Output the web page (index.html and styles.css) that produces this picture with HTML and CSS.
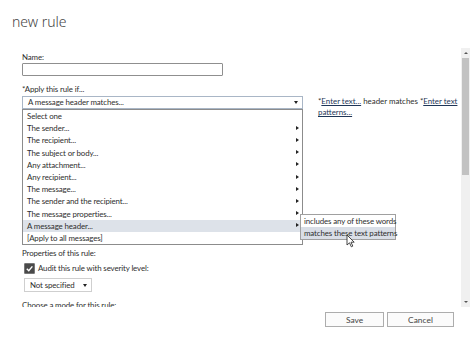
FILE: index.html
```html
<!DOCTYPE html>
<html lang="en">

<head>
  <meta charset="UTF-8">
  <meta name="viewport" content="width=device-width, initial-scale=1.0">
  <title>new rule</title>
  <link rel="stylesheet" href="styles.css">
</head>

<body>
  <div class="header">new rule</div>

  <div class="main">
    <div class="content">
      <div class="label">Name:</div>
      <div class="textInput"></div>

      <div class="label mt">*Apply this rule if...</div>
      <div class="condition">
        <div class="selectWrap">
          <div class="select">
            <span>A message header matches...</span>
            <span class="caret"></span>
          </div>
          <ul class="list">
            <li>Select one</li>
            <li class="sub">The sender...</li>
            <li class="sub">The recipient...</li>
            <li class="sub">The subject or body...</li>
            <li class="sub">Any attachment...</li>
            <li class="sub">Any recipient...</li>
            <li class="sub">The message...</li>
            <li class="sub">The sender and the recipient...</li>
            <li class="sub">The message properties...</li>
            <li class="sub active">A message header...
              <ul class="submenu">
                <li>includes any of these words</li>
                <li class="hover">matches these text patterns</li>
              </ul>
              <svg class="cursor" width="10" height="14" viewBox="0 0 10 14">
                <path d="M1 1 L1 11 L3.5 8.8 L5.3 12.8 L6.8 12.1 L5 8.2 L8.2 8.2 Z" fill="#fff" stroke="#333" stroke-width="0.9" stroke-linejoin="round" />
              </svg>
            </li>
            <li>[Apply to all messages]</li>
          </ul>
        </div>
        <p class="desc">*<a href="#">Enter text...</a> header matches *<a href="#">Enter text patterns...</a></p>
      </div>

      <div class="label props">Properties of this rule:</div>
      <div class="check">
        <span class="box"></span>
        <span>Audit this rule with severity level:</span>
      </div>
      <div class="severity">
        <span>Not specified</span>
        <span class="caret"></span>
      </div>
      <div class="label mode">Choose a mode for this rule:</div>
    </div>

    <div class="scrollbar">
      <div class="arrow up"></div>
      <div class="track">
        <div class="thumb"></div>
      </div>
      <div class="arrow down"></div>
    </div>
  </div>

  <div class="footer">
    <button>Save</button>
    <button>Cancel</button>
  </div>
</body>

</html>
```

FILE: styles.css
```css
body {
  margin: 0;
  width: 474px;
  height: 348px;
  overflow: hidden;
  font-family: Lato, "Noto Sans", sans-serif;
  font-size: 7.9px;
  letter-spacing: -0.12px;
  color: #2e2e2e;
  background-color: #fff;
}

.header {
  height: 48px;
  padding-left: 12px;
  box-sizing: border-box;
  padding-top: 12px;
  font-family: "Noto Sans", sans-serif;
  font-size: 14px;
  font-weight: 300;
  letter-spacing: 0;
  color: #444;
  line-height: 20px;
}

.main {
  display: flex;
  height: 259px;
}

.content {
  flex: 1;
  overflow: hidden;
  padding: 3px 0 0 22px;
  white-space: nowrap;
}

.label {
  line-height: 12px;
}

.mt {
  margin-top: 7px;
}

.textInput {
  width: 199px;
  height: 11px;
  border: 1px solid #8f8f8f;
  border-radius: 1px;
}

.condition {
  display: flex;
  align-items: flex-start;
  margin-top: 1px;
}

.selectWrap {
  position: relative;
  width: 281px;
  flex-shrink: 0;
}

.select {
  display: flex;
  align-items: center;
  justify-content: space-between;
  height: 11px;
  padding: 0 4px 0 5px;
  border: 1px solid #a9b6c6;
  line-height: 11px;
}

.caret {
  width: 0;
  height: 0;
  border-left: 2.5px solid transparent;
  border-right: 2.5px solid transparent;
  border-top: 3px solid #222;
}

.list {
  position: absolute;
  top: 13px;
  left: 0;
  width: 279px;
  margin: 0;
  padding: 0;
  list-style: none;
  border: 1px solid #8c8c8c;
  background-color: #fff;
  z-index: 2;
}

.list > li {
  position: relative;
  height: 12.2px;
  line-height: 12.2px;
  padding-left: 4px;
}

.list > li.sub::after {
  content: '';
  position: absolute;
  right: 3px;
  top: 3.7px;
  border-top: 2.5px solid transparent;
  border-bottom: 2.5px solid transparent;
  border-left: 3px solid #222;
}

.list > li.active {
  background-color: #dde2e9;
}

.submenu {
  position: absolute;
  left: 277px;
  top: -6px;
  width: 94px;
  margin: 0;
  padding: 0;
  list-style: none;
  border: 1px solid #a0a0a0;
  background-color: #fff;
}

.submenu li {
  height: 12px;
  line-height: 12px;
  padding-left: 3px;
}

.submenu li.hover {
  background-color: #d9dee6;
}

.cursor {
  position: absolute;
  left: 323px;
  top: 14px;
}

.desc {
  width: 142px;
  margin: 0 0 0 15px;
  line-height: 11px;
  letter-spacing: 0;
  white-space: normal;
}

.desc a {
  color: #1e3557;
}

.props {
  margin-top: 129px;
}

.check {
  display: flex;
  align-items: center;
  gap: 3px;
  margin-top: 3px;
  line-height: 12px;
  padding-left: 2px;
}

.box {
  width: 9px;
  height: 9px;
  border: 1px solid #777;
  border-radius: 1px;
  background: #4a4a4a url("data:image/svg+xml,%3Csvg xmlns='http://www.w3.org/2000/svg' viewBox='0 0 10 10'%3E%3Cpath d='M2 5.2 L4.2 7.4 L8.2 2.6' fill='none' stroke='%23fff' stroke-width='1.6'/%3E%3C/svg%3E") center / 9px 9px no-repeat;
}

.severity {
  display: inline-flex;
  align-items: center;
  gap: 8px;
  height: 12px;
  margin: 4px 0 0 2px;
  padding: 0 4px 0 5px;
  border: 1px solid #cfcfcf;
  line-height: 12px;
}

.mode {
  margin-top: 7px;
}

.scrollbar {
  display: flex;
  flex-direction: column;
  width: 9px;
  margin-right: 4px;
  background-color: #f0f0f0;
}

.arrow {
  height: 10px;
  display: flex;
  justify-content: center;
  align-items: center;
}

.arrow::before {
  content: '';
  border-left: 2px solid transparent;
  border-right: 2px solid transparent;
}

.arrow.up::before {
  border-bottom: 2.5px solid #555;
}

.arrow.down::before {
  border-top: 2.5px solid #555;
}

.track {
  flex: 1;
  padding: 0 1px;
}

.thumb {
  height: 117px;
  background-color: #c2c2c2;
}

.footer {
  display: flex;
  justify-content: flex-end;
  gap: 3px;
  padding: 5px 20px 0 0;
}

.footer button {
  height: 15px;
  padding: 0;
  font-family: inherit;
  font-size: 8.4px;
  letter-spacing: 0;
  color: #444;
  border: 1px solid #adadad;
  background-color: #fbfbfb;
  border-radius: 0;
}

.footer button:first-child {
  width: 59px;
}

.footer button:last-child {
  width: 67px;
}
```
